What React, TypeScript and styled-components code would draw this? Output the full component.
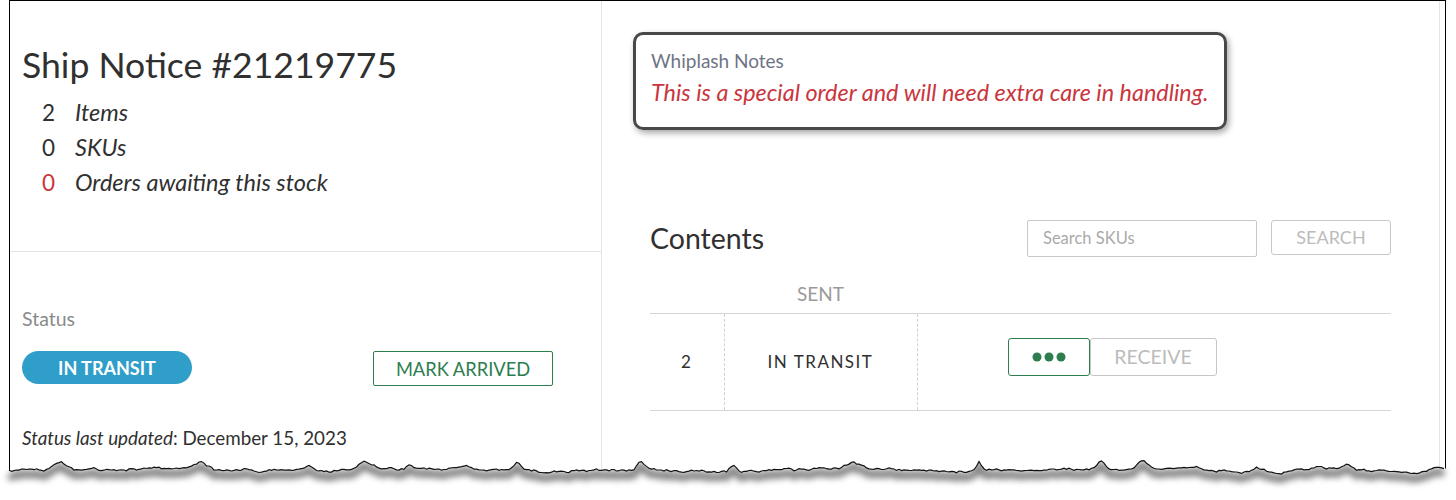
import React, { useMemo } from "react";
import styled, { createGlobalStyle } from "styled-components";

const Colors = {
  TEXT: "#303030",
  MUTED: "#8a8a8a",
  NOTE_LABEL: "#6f7485",
  RED: "#c9363e",
  GREEN: "#2e7d4f",
  BLUE: "#2f9ec8",
  RULE: "#e3e3ec",
  TABLE_RULE: "#d6d6d6",
  DASH: "#cfcfd6",
  LIGHT_TEXT: "#bcbcbc",
  LIGHT_BORDER: "#c8c8c8",
};

const GlobalStyle = createGlobalStyle`
  html, body {
    margin: 0;
    padding: 0;
    background: #ffffff;
  }
  body {
    font-family: Lato, "Open Sans", "Liberation Sans", sans-serif;
    color: ${Colors.TEXT};
  }
  * { box-sizing: border-box; }
`;

const Page = styled.div`
  position: relative;
  width: 1456px;
  height: 500px;
  overflow: hidden;
  padding-left: 9px;
`;

const Frame = styled.div`
  display: flex;
  width: 1437px;
  height: 500px;
  border: 1px solid #000;
  border-bottom: 0;
  padding-right: 5px;
`;

/* ---------- left column ---------- */

const LeftCol = styled.div`
  flex: none;
  width: 592px;
  border-right: 1px solid ${Colors.RULE};
`;

const Summary = styled.section`
  padding: 42px 12px 51px;
  border-bottom: 1px solid ${Colors.RULE};
`;

const Title = styled.h1`
  margin: 0;
  font-size: 35.6px;
  font-weight: 400;
  line-height: 43px;
  color: ${Colors.TEXT};
`;

const StatList = styled.div`
  display: grid;
  grid-template-columns: 33px auto;
  margin: 9px 0 0 20px;
  font-size: 23.5px;
  line-height: 35px;
`;

const StatCount = styled.span<{ alert?: boolean }>`
  font-size: 22.5px;
  color: ${props => (props.alert ? Colors.RED : Colors.TEXT)};
`;

const StatLabel = styled.span`
  font-style: italic;
`;

const StatusSection = styled.section`
  padding: 55px 48px 0 12px;
`;

const FieldLabel = styled.div`
  font-size: 19.5px;
  line-height: 1.2;
  color: ${Colors.MUTED};
`;

const StatusRow = styled.div`
  display: flex;
  justify-content: space-between;
  align-items: flex-start;
  margin-top: 21px;
`;

const StatusPill = styled.div`
  display: flex;
  align-items: center;
  justify-content: center;
  width: 170px;
  height: 33px;
  border-radius: 17px;
  background: ${Colors.BLUE};
  color: #fff;
  font-size: 18px;
  font-weight: 700;
`;

const OutlineButton = styled.button`
  width: 180px;
  height: 35px;
  border: 1px solid ${Colors.GREEN};
  border-radius: 2px;
  background: #fff;
  color: ${Colors.GREEN};
  font-family: inherit;
  font-size: 18.3px;
  padding: 0;
`;

const Updated = styled.div`
  margin-top: 41px;
  font-size: 18.8px;
  line-height: 1.2;
  em { font-style: italic; }
`;

/* ---------- right column ---------- */

const RightCol = styled.div`
  flex: 1;
  border-right: 1px solid ${Colors.RULE};
`;

const NotesWrap = styled.div`
  padding: 31px 0 0 31px;
`;

const NotesBox = styled.div`
  width: 594px;
  padding: 15px 12px 21px 15px;
  border: 3px solid #484848;
  border-radius: 10px;
  box-shadow: 2px 3px 6px rgba(0, 0, 0, 0.35);
`;

const NotesLabel = styled.div`
  font-size: 19px;
  line-height: 1.2;
  color: ${Colors.NOTE_LABEL};
`;

const NotesText = styled.div`
  margin-top: 5px;
  font-size: 23.4px;
  line-height: 1.2;
  font-style: italic;
  white-space: nowrap;
  color: ${Colors.RED};
`;

const ContentsSection = styled.section`
  padding: 90px 48px 0;
`;

const ContentsHeader = styled.div`
  display: flex;
  align-items: center;
`;

const ContentsTitle = styled.h2`
  flex: 1;
  margin: 0;
  font-size: 28.5px;
  font-weight: 400;
  line-height: 1.2;
`;

const SearchInput = styled.input`
  width: 230px;
  height: 37px;
  margin-right: 14px;
  padding: 0 15px;
  border: 1px solid ${Colors.LIGHT_BORDER};
  border-radius: 2px;
  font-family: inherit;
  font-size: 16.5px;
  color: ${Colors.TEXT};
  outline: none;
  &::placeholder { color: #aaaaaa; }
`;

const GhostButton = styled.button<{ w: number; size?: number }>`
  align-self: flex-start;
  width: ${props => props.w}px;
  height: 35px;
  padding: 0;
  border: 1px solid ${Colors.LIGHT_BORDER};
  border-radius: 3px;
  background: #fff;
  color: ${Colors.LIGHT_TEXT};
  font-family: inherit;
  font-size: ${props => props.size || 18}px;
`;

const Table = styled.table`
  width: 100%;
  margin-top: 26px;
  border-collapse: collapse;
`;

const Th = styled.th`
  padding: 0 0 7px;
  font-size: 19px;
  font-weight: 400;
  line-height: 1.2;
  color: #9a9a9a;
  text-align: center;
`;

const Td = styled.td<{ dashed?: boolean }>`
  height: 97px;
  padding: 0;
  border-top: 1px solid ${Colors.TABLE_RULE};
  border-bottom: 1px solid ${Colors.TABLE_RULE};
  border-right: ${props => (props.dashed ? `1px dashed ${Colors.DASH}` : "0")};
  text-align: center;
  vertical-align: middle;
  font-size: 17px;
  letter-spacing: ${props => (props.dashed ? "1.5px" : "0")};
`;

const ActionCell = styled(Td)`
  padding-left: 90px;
  text-align: left;
`;

const ButtonGroup = styled.div`
  display: flex;
  margin-bottom: 10px;
`;

const DotsButton = styled.button`
  display: flex;
  align-items: center;
  justify-content: center;
  width: 82px;
  height: 38px;
  padding: 0;
  border: 1px solid ${Colors.GREEN};
  border-radius: 3px;
  background: #fff;
`;

const ReceiveButton = styled(GhostButton)`
  height: 38px;
  border-color: #c6c6c6;
`;

/* ---------- torn edge ---------- */

const TornSvg = styled.svg`
  position: absolute;
  left: 0;
  top: 440px;
  width: 1456px;
  height: 60px;
`;

function buildEdge(): string {
  let seed = 12345;
  const rand = () => {
    seed = (seed * 16807) % 2147483647;
    return seed / 2147483647;
  };
  const bumps: { x: number; h: number; w: number }[] = [];
  let bx = 20;
  while (bx < 1450) {
    bx += 30 + rand() * 100;
    bumps.push({ x: bx, h: 3 + rand() * 7, w: 5 + rand() * 10 });
  }
  const pts: string[] = [];
  let walk = 0;
  for (let x = 9; x <= 1446; x += 2.5) {
    walk += (rand() - 0.5) * 1.8;
    walk *= 0.9;
    let y = 30 + walk + (rand() - 0.5) * 1.4 + Math.sin(x / 37) * 1.3;
    bumps.forEach(b => {
      const d = Math.abs(x - b.x);
      if (d < b.w) y -= b.h * (1 - d / b.w);
    });
    pts.push(`${x.toFixed(1)},${y.toFixed(1)}`);
  }
  return pts.join(" L");
}

function TornEdge() {
  const line = useMemo(() => buildEdge(), []);
  const first = line.split(" L")[0].split(",")[1];
  const last = line.split(" L").slice(-1)[0].split(",")[1];
  const region = `M0,${first} L${line} L1456,${last} L1456,60 L0,60 Z`;
  return (
    <TornSvg viewBox="0 0 1456 60">
      <defs>
        <clipPath id="torn-below">
          <path d={region} />
        </clipPath>
        <filter id="torn-blur" x="-5%" y="-100%" width="110%" height="300%">
          <feGaussianBlur stdDeviation="3" />
        </filter>
      </defs>
      <path d={region} fill="#fff" />
      <g clipPath="url(#torn-below)">
        <path
          d={`M${line}`}
          transform="translate(0 5)"
          fill="none"
          stroke="#5a5a5a"
          strokeWidth="8"
          opacity="0.75"
          filter="url(#torn-blur)"
        />
      </g>
      <path d={`M${line}`} fill="none" stroke="#111" strokeWidth="1.2" />
    </TornSvg>
  );
}

function Dots() {
  return (
    <svg width="34" height="10" viewBox="0 0 34 10">
      <circle cx="5" cy="5" r="4.5" fill={Colors.GREEN} />
      <circle cx="17" cy="5" r="4.5" fill={Colors.GREEN} />
      <circle cx="29" cy="5" r="4.5" fill={Colors.GREEN} />
    </svg>
  );
}

const stats = [
  { count: 2, label: "Items" },
  { count: 0, label: "SKUs" },
  { count: 0, label: "Orders awaiting this stock", alert: true },
];

function App() {
  return (
    <Page>
      <GlobalStyle />
      <Frame>
        <LeftCol>
          <Summary>
            <Title>Ship Notice #21219775</Title>
            <StatList>
              {stats.map((s, idx) => (
                <React.Fragment key={"stat-" + idx}>
                  <StatCount alert={s.alert}>{s.count}</StatCount>
                  <StatLabel>{s.label}</StatLabel>
                </React.Fragment>
              ))}
            </StatList>
          </Summary>
          <StatusSection>
            <FieldLabel>Status</FieldLabel>
            <StatusRow>
              <StatusPill>IN TRANSIT</StatusPill>
              <OutlineButton>MARK ARRIVED</OutlineButton>
            </StatusRow>
            <Updated>
              <em>Status last updated</em>: December 15, 2023
            </Updated>
          </StatusSection>
        </LeftCol>

        <RightCol>
          <NotesWrap>
            <NotesBox>
              <NotesLabel>Whiplash Notes</NotesLabel>
              <NotesText>This is a special order and will need extra care in handling.</NotesText>
            </NotesBox>
          </NotesWrap>

          <ContentsSection>
            <ContentsHeader>
              <ContentsTitle>Contents</ContentsTitle>
              <SearchInput placeholder="Search SKUs" />
              <GhostButton w={120}>SEARCH</GhostButton>
            </ContentsHeader>
            <Table>
              <colgroup>
                <col style={{ width: 74 }} />
                <col style={{ width: 193 }} />
                <col />
              </colgroup>
              <thead>
                <tr>
                  <Th />
                  <Th>SENT</Th>
                  <Th />
                </tr>
              </thead>
              <tbody>
                <tr>
                  <Td dashed>2</Td>
                  <Td dashed>IN TRANSIT</Td>
                  <ActionCell>
                    <ButtonGroup>
                      <DotsButton><Dots /></DotsButton>
                      <ReceiveButton w={127} size={19.5}>RECEIVE</ReceiveButton>
                    </ButtonGroup>
                  </ActionCell>
                </tr>
              </tbody>
            </Table>
          </ContentsSection>
        </RightCol>
      </Frame>
      <TornEdge />
    </Page>
  );
}

export default App;
